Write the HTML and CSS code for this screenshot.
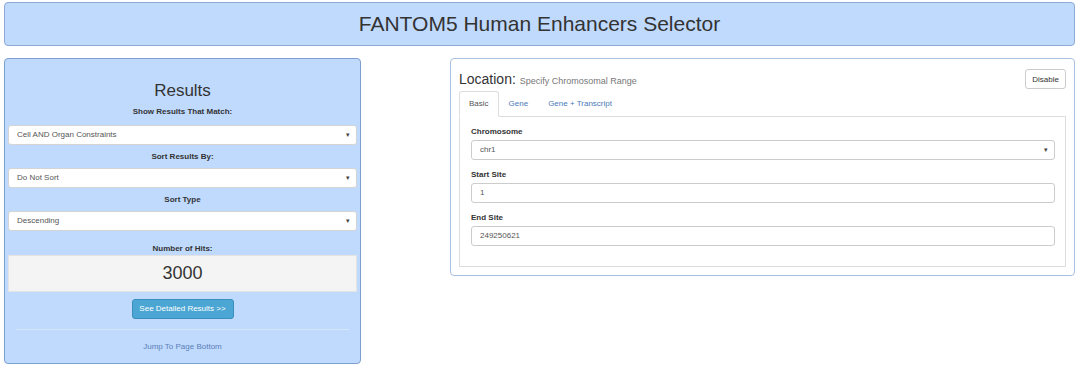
FILE: index.html
```html
<!DOCTYPE html>
<html lang="en">
<head>
    <meta charset="UTF-8">
    <title>FANTOM5 Human Enhancers Selector</title>
    <link rel="stylesheet" href="styles.css">
</head>
<body>

    <div class="header">
        <h1>FANTOM5 Human Enhancers Selector</h1>
    </div>

    <div class="main">
        <div class="results">
            <h3>Results</h3>

            <div class="res-label first">Show Results That Match:</div>
            <div class="control">Cell AND Organ Constraints</div>

            <div class="res-label">Sort Results By:</div>
            <div class="control">Do Not Sort</div>

            <div class="res-label">Sort Type</div>
            <div class="control">Descending</div>

            <div class="res-label hits-label">Number of Hits:</div>
            <div class="well">3000</div>

            <div class="btn-row">
                <button class="btn-info">See Detailed Results &gt;&gt;</button>
            </div>

            <hr>
            <a class="jump" href="#bottom">Jump To Page Bottom</a>
        </div>

        <div class="location">
            <div class="loc-head">
                <div class="loc-title">Location: <small>Specify Chromosomal Range</small></div>
                <button class="btn-default">Disable</button>
            </div>

            <ul class="tabs">
                <li class="active">Basic</li>
                <li>Gene</li>
                <li>Gene + Transcript</li>
            </ul>

            <div class="tab-content">
                <div class="field-label first">Chromosome</div>
                <div class="control">chr1</div>

                <div class="field-label">Start Site</div>
                <div class="control input">1</div>

                <div class="field-label">End Site</div>
                <div class="control input">249250621</div>
            </div>
        </div>
    </div>

</body>
</html>
```

FILE: styles.css
```css
body {
    font-family: 'Liberation Sans', Arial, sans-serif;
    color: #333;
    background-color: #fff;
    margin: 0;
    padding: 2px 5px 0 4px;
}
.header {
    height: 42px;
    background-color: #c0dafe;
    border: 1px solid #8eaad6;
    border-radius: 4px;
}
.header h1 {
    margin: 0;
    font-size: 21px;
    font-weight: normal;
    line-height: 42px;
    text-align: center;
}
.main {
    display: grid;
    grid-template-columns: 357px 1fr;
    column-gap: 89px;
    align-items: start;
    margin-top: 12px;
}

/* results panel */
.results {
    background-color: #c0dafe;
    border: 1px solid #7f9fd0;
    border-radius: 4px;
    padding: 0 3px 10px 3px;
}
.results h3 {
    margin: 22px 0 0 0;
    font-size: 17px;
    font-weight: normal;
    line-height: 20px;
    text-align: center;
}
.res-label {
    font-size: 8px;
    font-weight: bold;
    line-height: 12px;
    text-align: center;
    margin: 6px 0 5px 0;
}
.res-label.first {
    margin-top: 5px;
    margin-bottom: 7px;
}
.res-label.hits-label {
    margin-top: 12px;
    margin-bottom: 0;
}
.control {
    position: relative;
    height: 18px;
    line-height: 18px;
    padding: 0 8px;
    font-size: 8px;
    color: #555;
    background-color: #fff;
    border: 1px solid #d4d4d4;
    border-radius: 3px;
}
.control::after {
    content: '\25BE';
    position: absolute;
    right: 6px;
    top: 0;
    font-size: 7px;
    color: #444;
}
.control.input::after {
    content: none;
}
.well {
    height: 35px;
    line-height: 35px;
    font-size: 18px;
    text-align: center;
    background-color: #f4f4f4;
    border: 1px solid #e4e4e4;
}
.btn-row {
    text-align: center;
    margin-top: 5px;
}
.btn-info {
    height: 20px;
    width: 102px;
    padding: 0;
    font-family: inherit;
    font-size: 8px;
    color: #fff;
    background-color: #4ba6d3;
    border: 1px solid #3b8fbf;
    border-radius: 3px;
}
.results hr {
    border: none;
    border-top: 1px solid #d6e6fb;
    margin: 10px 8px 11px 8px;
}
.jump {
    display: block;
    text-align: center;
    font-size: 8px;
    line-height: 12px;
    color: #5b80b8;
    text-decoration: none;
}

/* location panel */
.location {
    background-color: #fff;
    border: 1px solid #a9c0de;
    border-radius: 4px;
    padding: 8px;
}
.loc-head {
    display: flex;
    justify-content: space-between;
    align-items: center;
    height: 24px;
}
.loc-title {
    font-size: 14px;
}
.loc-title small {
    font-size: 9px;
    color: #777;
}
.btn-default {
    height: 20px;
    padding: 0 6px;
    font-family: inherit;
    font-size: 8px;
    color: #333;
    background-color: #fff;
    border: 1px solid #ccc;
    border-radius: 3px;
}
.tabs {
    display: flex;
    list-style: none;
    margin: 0;
    padding: 0;
    border-bottom: 1px solid #ddd;
}
.tabs li {
    padding: 0 9px;
    line-height: 24px;
    font-size: 8px;
    color: #4a7ab8;
    border: 1px solid transparent;
    border-radius: 3px 3px 0 0;
    margin-bottom: -1px;
}
.tabs li.active {
    color: #555;
    background-color: #fff;
    border-color: #ddd #ddd transparent #ddd;
}
.tab-content {
    border: 1px solid #ddd;
    border-top: none;
    padding: 9px 10px 20px 11px;
}
.field-label {
    font-size: 8px;
    font-weight: bold;
    line-height: 12px;
    margin: 9px 0 2px 0;
}
.field-label.first {
    margin-top: 0;
}
.tab-content .control {
    border-color: #ccc;
}
```
